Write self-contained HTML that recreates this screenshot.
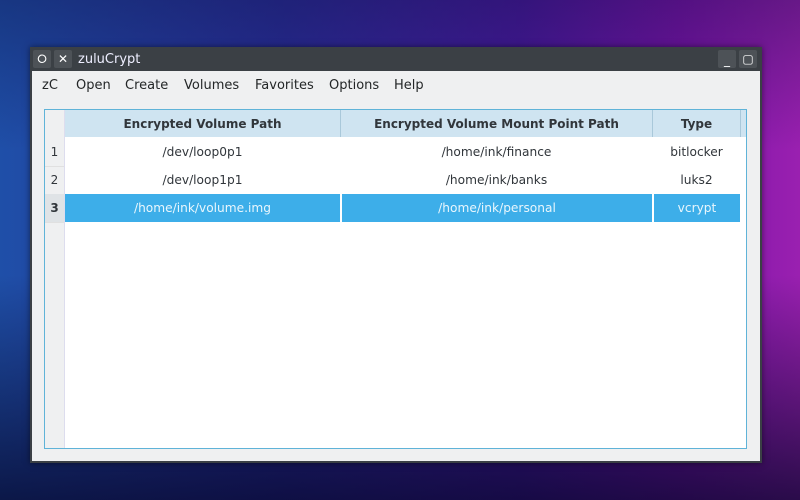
<!DOCTYPE html><html><head><style>
body{margin:0;width:800px;height:500px;overflow:hidden;font-family:"DejaVu Sans","Liberation Sans",sans-serif;
background:linear-gradient(180deg,rgba(10,10,60,.35) 0%,rgba(0,0,0,0) 30%,rgba(0,0,0,0) 55%,rgba(5,5,40,.75) 100%),linear-gradient(90deg,#1f4fa8 0%,#2a2f9a 35%,#4a1a9e 65%,#7a14a8 85%,#9a20b0 100%);position:relative}
.win{position:absolute;left:30px;top:47px;width:732px;height:416px;background:#3b4045;box-shadow:0 0 6px rgba(0,0,0,.5)}
.tb{position:absolute;left:0;top:0;width:732px;height:24px;color:#eef;font-size:13px}
.btn{position:absolute;top:3px;width:18px;height:18px;background:#4d5257;border-radius:2px;color:#fff;text-align:center;line-height:18px;font-size:12px}
.body{position:absolute;left:2px;top:24px;width:728px;height:390px;background:#eff0f1}
.menu{position:absolute;top:7px;font-size:13px;color:#232627}
.tbl{position:absolute;left:12px;top:38px;width:701px;height:338px;border:1px solid #5fb3d8;background:#fff}
.rn{position:absolute;left:0;top:0;width:19px;height:338px;background:#eff0f1;border-right:1px solid #dde}
.hd{position:absolute;top:0;height:27px;background:#cfe4f1;border-right:1px solid #a9c8da;font-weight:bold;font-size:12px;color:#31363b;text-align:center;line-height:28px}
.c{position:absolute;height:28px;line-height:29px;font-size:12.2px;color:#31363b;text-align:center}
.sel{background:#3daee9;color:#e8f6fd}
.n{position:absolute;left:0;width:19px;height:28px;line-height:29px;font-size:12px;text-align:center;color:#31363b;border-bottom:1px solid #e0e0e0}
</style></head><body>
<div class="win">
<div class="tb"><div class="btn" style="left:3px">⭘</div><div class="btn" style="left:24px">✕</div>
<span style="position:absolute;left:48px;top:5px">zuluCrypt</span>
<div class="btn" style="left:688px;line-height:20px">_</div><div class="btn" style="left:709px">▢</div></div>
<div class="body">
<span class="menu" style="left:10px">zC</span><span class="menu" style="left:44px">Open</span><span class="menu" style="left:93px">Create</span><span class="menu" style="left:152px">Volumes</span><span class="menu" style="left:223px">Favorites</span><span class="menu" style="left:297px">Options</span><span class="menu" style="left:362px">Help</span>
<div class="tbl">
<div class="rn"></div>
<div class="hd" style="left:20px;width:275px">Encrypted Volume Path</div>
<div class="hd" style="left:296px;width:311px">Encrypted Volume Mount Point Path</div>
<div class="hd" style="left:608px;width:87px">Type</div>
<div class="hd" style="left:696px;width:5px;border:0"></div>
<div class="n" style="top:28px">1</div><div class="n" style="top:56px">2</div><div class="n" style="top:84px;font-weight:bold;background:#dfe3e6">3</div>
<div class="c" style="left:20px;width:275px;top:28px">/dev/loop0p1</div>
<div class="c" style="left:296px;width:311px;top:28px">/home/ink/finance</div>
<div class="c" style="left:608px;width:87px;top:28px">bitlocker</div>
<div class="c" style="left:20px;width:275px;top:56px">/dev/loop1p1</div>
<div class="c" style="left:296px;width:311px;top:56px">/home/ink/banks</div>
<div class="c" style="left:608px;width:87px;top:56px">luks2</div>
<div class="c sel" style="left:20px;width:275px;top:84px">/home/ink/volume.img</div>
<div class="c sel" style="left:297px;width:310px;top:84px">/home/ink/personal</div>
<div class="c sel" style="left:609px;width:86px;top:84px">vcrypt</div>
</div></div></div>
</body></html>
